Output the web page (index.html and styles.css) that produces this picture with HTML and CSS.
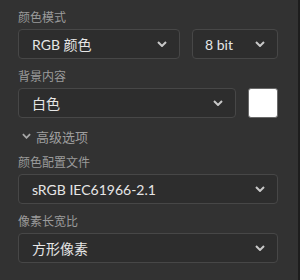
FILE: index.html
```html
<!DOCTYPE html>
<html lang="zh">
<head>
    <meta charset="UTF-8">
    <title>新建文档</title>
    <link rel="stylesheet" href="styles.css">
</head>
<body>
    <div class="panel">
        <div class="field">
            <div class="label">颜色模式</div>
            <div class="row">
                <div class="select mode">
                    <span>RGB 颜色</span>
                    <svg class="chev" viewBox="0 0 10 6"><path d="M1 1 L5 5 L9 1"/></svg>
                </div>
                <div class="select depth">
                    <span>8 bit</span>
                    <svg class="chev" viewBox="0 0 10 6"><path d="M1 1 L5 5 L9 1"/></svg>
                </div>
            </div>
        </div>
        <div class="field">
            <div class="label">背景内容</div>
            <div class="row">
                <div class="select bg">
                    <span>白色</span>
                    <svg class="chev" viewBox="0 0 10 6"><path d="M1 1 L5 5 L9 1"/></svg>
                </div>
                <div class="swatch"></div>
            </div>
        </div>
        <div class="advanced">
            <svg class="chev small" viewBox="0 0 10 6"><path d="M1 1 L5 5 L9 1"/></svg>
            <span>高级选项</span>
        </div>
        <div class="field">
            <div class="label">颜色配置文件</div>
            <div class="select">
                <span>sRGB IEC61966-2.1</span>
                <svg class="chev" viewBox="0 0 10 6"><path d="M1 1 L5 5 L9 1"/></svg>
            </div>
        </div>
        <div class="field">
            <div class="label">像素长宽比</div>
            <div class="select">
                <span>方形像素</span>
                <svg class="chev" viewBox="0 0 10 6"><path d="M1 1 L5 5 L9 1"/></svg>
            </div>
        </div>
    </div>
    <div class="edge"></div>
</body>
</html>
```

FILE: styles.css
```css
body {
    margin: 0;
    background-color: #323232;
    font-family: 'Lato', 'Noto Sans CJK SC', sans-serif;
    display: flex;
    height: 280px;
    overflow: hidden;
}
.panel {
    width: 260px;
    padding: 9px 20px 0 18px;
}
.edge {
    width: 2px;
    background-color: #1d1d1d;
}
.field {
    display: flex;
    flex-direction: column;
    gap: 2px;
    margin-bottom: 9px;
}
.label {
    height: 18px;
    line-height: 18px;
    font-size: 12px;
    color: #9b9b9b;
}
.row {
    display: flex;
    gap: 12px;
    align-items: center;
}
.select {
    height: 28px;
    border: 1px solid #474747;
    border-radius: 4px;
    background-color: #2d2d2d;
    display: flex;
    align-items: center;
    justify-content: space-between;
    padding: 0 12px 0 13px;
    color: #e6e6e6;
    font-size: 14px;
}
.select.mode {
    flex: 1;
}
.select.depth {
    width: 60px;
    padding-left: 12px;
}
.select.bg {
    flex: 1;
}
.swatch {
    width: 28px;
    height: 28px;
    border: 1px solid #6a6a6a;
    border-radius: 3px;
    background-color: #ffffff;
    flex-shrink: 0;
}
.chev {
    width: 10px;
    height: 6px;
    fill: none;
    stroke: #c8c8c8;
    stroke-width: 2;
}
.chev.small {
    width: 9px;
    stroke: #a8a8a8;
}
.advanced {
    display: flex;
    align-items: center;
    gap: 5px;
    height: 18px;
    margin: 0 0 9px 4px;
    color: #9f9f9f;
    font-size: 13px;
}
```
